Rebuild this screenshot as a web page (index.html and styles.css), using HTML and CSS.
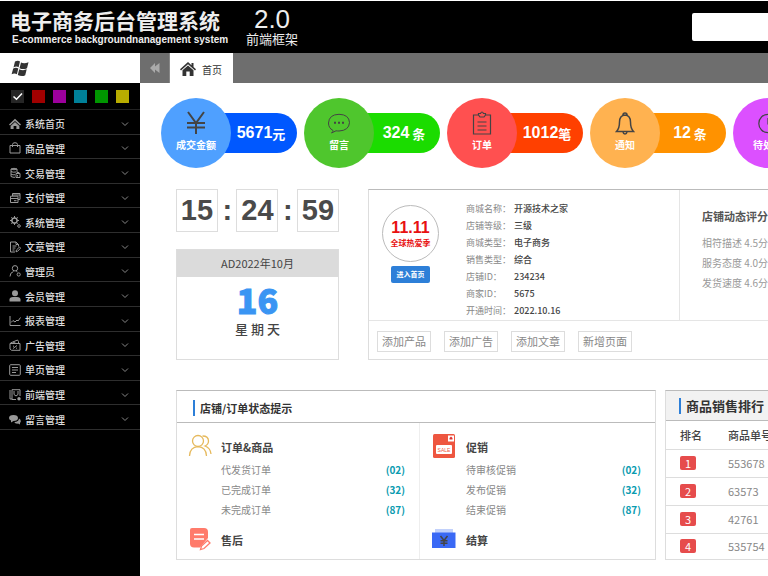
FILE: index.html
```html
<!DOCTYPE html>
<html lang="zh-CN">
<head>
    <meta charset="UTF-8">
    <meta name="viewport" content="width=device-width, initial-scale=1.0">
    <title>电子商务后台管理系统</title>
    <link rel="stylesheet" href="styles.css">
</head>
<body>
<div class="page">
    <header class="header">
        <div class="brand">
            <h1>电子商务后台管理系统</h1>
            <p>E-commerce backgroundnanagement system</p>
        </div>
        <div class="version">
            <strong>2.0</strong>
            <span>前端框架</span>
        </div>
        <input class="search" type="search" aria-label="搜索">
    </header>

    <div class="layout">
        <aside class="sidebar">
            <div class="logo">
                <svg width="18" height="17" viewBox="0 0 18 17" fill="#333"><path d="M4 1.6Q7-.2 9 1.4L7.6 7.3Q5.400 5.900 2.500 7.400ZM10 2.400Q13 4 17.500 2.200L16 8.200Q12.500 9.900 8.500 8.200ZM2.200 8.500Q5 7 7.300 8.400L5.900 14.300Q3.600 12.700.6 14.200ZM8.200 9.200Q12 11 15.700 9.300L14.200 15.200Q11 17 6.800 15Z"/></svg>
            </div>
            <div class="themes">
                <button class="swatch dark" aria-label="黑色"><svg width="13" height="13" viewBox="0 0 13 13" fill="none" stroke="#fff" stroke-width="1.5"><path d="M2.500 6.500L5.500 9.300L11 3.500"/></svg></button>
                <button class="swatch red" aria-label="红色"></button>
                <button class="swatch purple" aria-label="紫色"></button>
                <button class="swatch teal" aria-label="青色"></button>
                <button class="swatch green" aria-label="绿色"></button>
                <button class="swatch yellow" aria-label="黄色"></button>
            </div>
            <nav class="menu">
                <a href="#"><svg class="icon" viewBox="0 0 12 12"><path class="solid" d="M6 .8L12 6.500L11 7.500L6 3L1 7.500L0 6.500ZM6 4L10.400 8V11H7.400V8H4.600V11H1.600V8Z"/></svg>系统首页<svg class="arrow" viewBox="0 0 8 6"><path d="M1 1.500L4 4.500L7 1.500"/></svg></a>
                <a href="#"><svg class="icon" viewBox="0 0 12 12"><path d="M1 3.500H11V11H1ZM3.500 5V2.500Q3.500.7 6 .7T8.500 2.500V5"/></svg>商品管理<svg class="arrow" viewBox="0 0 8 6"><path d="M1 1.500L4 4.500L7 1.500"/></svg></a>
                <a href="#"><svg class="icon" viewBox="0 0 12 12"><path d="M2 2Q5 .6 8 2V5M2 2V9.500Q4 10.500 6 10.300M2 2Q5 3.500 8 2M2 4.600Q4 5.600 7 5M2 7.200Q4 8.200 6 7.700M7 6.500H11V10.500H7ZM8 6.500V5.500H10V6.500M8.500 8V9.500"/></svg>交易管理<svg class="arrow" viewBox="0 0 8 6"><path d="M1 1.500L4 4.500L7 1.500"/></svg></a>
                <a href="#"><svg class="icon" viewBox="0 0 12 12"><path d="M3.500 4V1.500H11V7.500H9M1.500 4.200H9V10.500H1.500ZM1.500 6.500H9M5 8.700H7.500M3.500 3H11"/></svg>支付管理<svg class="arrow" viewBox="0 0 8 6"><path d="M1 1.500L4 4.500L7 1.500"/></svg></a>
                <a href="#"><svg class="icon" viewBox="0 0 12 12"><circle cx="5.500" cy="4.500" r="2.600" stroke-width="1.500"/><path d="M5.500 0V2M5.500 7V9M1 4.500H3M8 4.500H10M2.300 1.300L3.700 2.700M7.300 6.300L8.700 7.700M8.700 1.300L7.300 2.700M3.700 6.300L2.300 7.700"/><circle cx="10" cy="10" r="1.300"/></svg>系统管理<svg class="arrow" viewBox="0 0 8 6"><path d="M1 1.500L4 4.500L7 1.500"/></svg></a>
                <a href="#"><svg class="icon" viewBox="0 0 12 12"><path d="M9.500 5.500V3.500L7 1H1.500V11H6M7 1V3.500H9.500M3.500 5H7.500M3.500 7H6.500M3.500 9H5.500M7 10.800L7.400 9L10.500 6L11.600 7.200L8.600 10.300Z"/></svg>文章管理<svg class="arrow" viewBox="0 0 8 6"><path d="M1 1.500L4 4.500L7 1.500"/></svg></a>
                <a href="#"><svg class="icon" viewBox="0 0 12 12"><circle cx="6" cy="3.300" r="2.700"/><path d="M1 11.500Q1 7.500 4.500 6.500M7.300 6.300L8.500 7"/><circle cx="9.700" cy="9.500" r="1.600"/></svg>管理员<svg class="arrow" viewBox="0 0 8 6"><path d="M1 1.500L4 4.500L7 1.500"/></svg></a>
                <a href="#"><svg class="icon" viewBox="0 0 12 12"><circle class="solid" cx="6" cy="3.200" r="3"/><path class="solid" d="M.5 11.600V9.500Q.5 7 4 7H8Q11.500 7 11.500 9.500V11.600Z"/></svg>会员管理<svg class="arrow" viewBox="0 0 8 6"><path d="M1 1.500L4 4.500L7 1.500"/></svg></a>
                <a href="#"><svg class="icon" viewBox="0 0 12 12"><path d="M1 1V10.500H11.500M2 7.500L4 5.500L6 7L8 5L9 6L11.500 2.500"/></svg>报表管理<svg class="arrow" viewBox="0 0 8 6"><path d="M1 1.500L4 4.500L7 1.500"/></svg></a>
                <a href="#"><svg class="icon" viewBox="0 0 12 12"><path d="M1 4.500H11V11.300H2.500L1 10ZM1.500 4L8.500 1L9.500 2.500V4.500M4 3L7 4.500M4 9.500L8 6.500M4 7.200H5M7 9.200H8"/></svg>广告管理<svg class="arrow" viewBox="0 0 8 6"><path d="M1 1.500L4 4.500L7 1.500"/></svg></a>
                <a href="#"><svg class="icon" viewBox="0 0 12 12"><rect x=".7" y=".7" width="10.600" height="10.600" rx="1"/><path d="M3 3.500H9M3 6H9M3 8.500H7"/></svg>单页管理<svg class="arrow" viewBox="0 0 8 6"><path d="M1 1.500L4 4.500L7 1.500"/></svg></a>
                <a href="#"><svg class="icon" viewBox="0 0 12 12"><path d="M1 1V10H3M3 .7H11V7M3 .7V10.500H7M5 2V5.500L7 7L9 5.500V2"/><circle class="solid" cx="10" cy="9.700" r="1.700"/></svg>前端管理<svg class="arrow" viewBox="0 0 8 6"><path d="M1 1.500L4 4.500L7 1.500"/></svg></a>
                <a href="#"><svg class="icon" viewBox="0 0 12 12"><path class="solid" d="M4.500 2Q9 2 9 5Q9 8 4.500 8L2 9.500V7.500Q0 6.500 0 5Q0 2 4.500 2ZM10 5.500Q12 6.500 11.800 8.300Q11.700 9.300 11 9.800V11.500L9 10.600Q6 10.900 5.300 9Q9.800 8.800 10 5.500Z"/></svg>留言管理<svg class="arrow" viewBox="0 0 8 6"><path d="M1 1.500L4 4.500L7 1.500"/></svg></a>
            </nav>
        </aside>

        <main class="main">
            <div class="tabs">
                <button class="collapse" aria-label="收起菜单"><svg width="10" height="10" viewBox="0 0 10 10" fill="#aaa"><path d="M5 0V3.500L9.500 0V10L5 6.500V10L0 5Z"/></svg></button>
                <a class="tab" href="#"><svg width="16" height="14" viewBox="0 0 16 14" fill="#333"><path d="M8 0L11.500 3.200V1H13.500V5L16 7.300L15 8.400L8 2.200L1 8.400L0 7.300ZM8 3.400L13.500 8.300V14H9.700V9.500H6.300V14H2.500V8.300Z"/></svg>首页</a>
            </div>

            <section class="stats">
                <div class="stat blue">
                    <div class="circle"><svg width="20" height="24" viewBox="0 0 20 24" fill="none" stroke="#444" stroke-width="2"><path d="M2 1L10 12L18 1M10 12V23M1 12H19M1 16.500H19"/></svg><span>成交金额</span></div>
                    <div class="pill"><b>5671</b>元</div>
                </div>
                <div class="stat lime">
                    <div class="circle"><svg width="24" height="24" viewBox="0 0 24 24" fill="none" stroke="#444"><path d="M6 19.500Q1.500 17 1.500 12Q2 3.500 12 3.300Q22 3.500 22.500 11.500Q22 19.500 12 20Q10 20 9 19.800L4.500 22Q6.500 20.500 6 19.500Z"/><path d="M7 11.800H9M11 11.800H13M15 11.800H17" stroke-width="2"/></svg><span>留言</span></div>
                    <div class="pill"><b>324</b>&nbsp;条</div>
                </div>
                <div class="stat coral">
                    <div class="circle"><svg width="20" height="24" viewBox="0 0 20 24" fill="none" stroke="#444" stroke-width="1.200"><path d="M6.500 4H1.500V23H18.500V4H13.500M6.500 2.500H8.500Q10-.5 11.500 2.500H13.500V4L12 6H8L6.500 4ZM5.500 11H14.500M5.500 15H14.500M5.500 19H14.500"/></svg><span>订单</span></div>
                    <div class="pill"><b>1012</b>笔</div>
                </div>
                <div class="stat orange">
                    <div class="circle"><svg width="20" height="24" viewBox="0 0 20 24" fill="none" stroke="#444" stroke-width="1.500"><path d="M8 4Q8 2 10 2T12 4M10 4Q15.500 4.500 15.500 11Q15.500 17.500 18.500 20.500H1.500Q4.500 17.500 4.500 11Q4.500 4.500 10 4ZM8 21Q8.300 23 10 23T12 21"/></svg><span>通知</span></div>
                    <div class="pill"><b>12</b>&nbsp;条</div>
                </div>
                <div class="stat violet">
                    <div class="circle"><svg width="20" height="24" viewBox="0 0 20 24" fill="none" stroke="#444" stroke-width="1.200"><circle cx="10" cy="12.500" r="9.200"/><path d="M10 7V13H15"/></svg><span>待处理</span></div>
                    <div class="pill"></div>
                </div>
            </section>

            <div class="row">
                <section class="today">
                    <div class="clock">
                        <span class="digits">15</span>
                        <span>:</span>
                        <span class="digits">24</span>
                        <span>:</span>
                        <span class="digits">59</span>
                    </div>
                    <div class="calendar">
                        <div class="month">AD2022年10月</div>
                        <div class="day">16</div>
                        <div class="week">星 期 天</div>
                    </div>
                </section>

                <section class="shop">
                    <div class="shop-body">
                        <div class="shop-logo">
                            <div class="badge"><b>11.11</b><span>全球热爱季</span></div>
                            <a href="#">进入首页</a>
                        </div>
                        <dl class="shop-info">
                            <dt>商城名称：</dt><dd>开源技术之家</dd>
                            <dt>店铺等级：</dt><dd>三级</dd>
                            <dt>商城类型：</dt><dd>电子商务</dd>
                            <dt>销售类型：</dt><dd>综合</dd>
                            <dt>店铺ID：</dt><dd>234234</dd>
                            <dt>商家ID：</dt><dd>5675</dd>
                            <dt>开通时间：</dt><dd>2022.10.16</dd>
                        </dl>
                        <div class="score">
                            <h2>店铺动态评分</h2>
                            <p>相符描述 4.5分</p>
                            <p>服务态度 4.0分</p>
                            <p>发货速度 4.6分</p>
                        </div>
                    </div>
                    <div class="shop-actions">
                        <button>添加产品</button>
                        <button>添加广告</button>
                        <button>添加文章</button>
                        <button>新增页面</button>
                    </div>
                </section>
            </div>

            <div class="row bottom">
                <section class="status">
                    <h2 class="status-title"><span class="bar"></span>店铺/订单状态提示</h2>
                    <div class="status-cols">
                        <div class="status-col">
                            <div class="group">
                                <svg width="24" height="24" viewBox="0 0 24 24" fill="none" stroke="#e6b95c" stroke-width="1.300"><circle cx="10" cy="7" r="5.500"/><path d="M1.500 22Q2 13 10 12.700Q18 13 18.500 22M14.500 2Q20.500 2 20.500 7Q20.500 10.500 17 12Q22.500 14 23 20"/></svg>
                                <h3>订单&amp;商品</h3>
                                <ul>
                                    <li>代发货订单<b>(02)</b></li>
                                    <li>已完成订单<b>(32)</b></li>
                                    <li>未完成订单<b>(87)</b></li>
                                </ul>
                            </div>
                            <div class="group">
                                <svg width="24" height="24" viewBox="0 0 24 24"><path fill="#ff7b6b" d="M2 3Q2 1 4 1H16Q20 1 20 5V11L12 20.500H6Q2 20.500 2 16.500Z"/><path stroke="#fff" stroke-width="1.500" d="M6 7.500H16M6 12H16"/><path fill="#fff" stroke="#ff7b6b" stroke-width="1.300" d="M12.500 22.500L13.500 19L19.500 13.500L22 16L16 21.500Z"/></svg>
                                <h3>售后</h3>
                            </div>
                        </div>
                        <div class="status-col">
                            <div class="group">
                                <svg width="24" height="24" viewBox="0 0 24 24"><rect width="22" height="24" rx="1.500" fill="#ee5640"/><path fill="#fff" d="M15 1.500H21V7.500H15Z"/><path fill="#d33" d="M16.500 4L18 2.500L19.500 4V5.500H16.500Z"/><rect x="3" y="11" width="16" height="9" rx="1" fill="#fff"/><text x="11" y="17.500" font-family="Liberation Sans, sans-serif" font-size="5" text-anchor="middle" fill="#ee5640">SALE</text></svg>
                                <h3>促销</h3>
                                <ul>
                                    <li>待审核促销<b>(02)</b></li>
                                    <li>发布促销<b>(32)</b></li>
                                    <li>结束促销<b>(87)</b></li>
                                </ul>
                            </div>
                            <div class="group">
                                <svg width="24" height="24" viewBox="0 0 24 24"><path fill="#c2d1fb" d="M2 2H20V6H2Z"/><path fill="#3a69f5" d="M-1 5.500H22.500V21H-1Z"/><path fill="none" stroke="#444" stroke-width="1.500" d="M7.500 9L11 13.500L14.500 9M11 13.500V19M7.500 13.700H14.500M7.500 16.300H14.500"/></svg>
                                <h3>结算</h3>
                            </div>
                        </div>
                    </div>
                </section>

                <section class="ranking">
                    <h2><span class="bar"></span>商品销售排行</h2>
                    <table>
                        <thead>
                            <tr><th>排名</th><th>商品单号</th></tr>
                        </thead>
                        <tbody>
                            <tr><td><span class="rank">1</span></td><td>553678</td></tr>
                            <tr><td><span class="rank">2</span></td><td>63573</td></tr>
                            <tr><td><span class="rank">3</span></td><td>42761</td></tr>
                            <tr><td><span class="rank">4</span></td><td>535754</td></tr>
                        </tbody>
                    </table>
                </section>
            </div>
        </main>
    </div>
</div>
</body>
</html>
```

FILE: styles.css
```css
* {
    box-sizing: border-box;
    margin: 0;
    padding: 0;
}
body {
    font-family: "Noto Sans CJK SC", sans-serif;
    font-size: 10px;
    color: #444;
    background: #fff;
    overflow: hidden;
}
a {
    color: inherit;
    text-decoration: none;
}
button {
    font-family: inherit;
    border: 0;
    cursor: pointer;
}
ul {
    list-style: none;
}
svg {
    display: block;
    flex: none;
}
.page {
    min-width: 960px;
    min-height: 100vh;
    display: flex;
    flex-direction: column;
}

/* header */
.header {
    display: flex;
    align-items: center;
    height: 52px;
    margin-top: 1px;
    padding: 0 68px 0 10px;
    background: #000;
    color: #eee;
}
.brand {
    width: 236px;
}
.brand h1 {
    font-size: 21px;
    font-weight: 700;
    line-height: 26px;
    white-space: nowrap;
}
.brand p {
    padding-left: 2px;
    font: bold 10px/14px "Liberation Sans", sans-serif;
    white-space: nowrap;
}
.version {
    display: flex;
    flex-direction: column;
    align-items: center;
}
.version strong {
    font: 26px/24px "Liberation Sans", sans-serif;
}
.version span {
    font-size: 13px;
    line-height: 16px;
}
.search {
    width: 200px;
    height: 28px;
    margin-left: auto;
    padding: 0 8px;
    border: 0;
    border-radius: 2px;
    background: #fff;
}

/* sidebar */
.layout {
    display: flex;
    flex: 1;
}
.sidebar {
    width: 140px;
    flex: none;
    background: #000;
}
.logo {
    display: flex;
    align-items: center;
    height: 30px;
    padding-left: 11px;
    background: #fff;
}
.themes {
    display: flex;
    align-items: center;
    gap: 8px;
    height: 27px;
    padding-left: 11px;
    border-bottom: 1px solid #222;
}
.swatch {
    width: 13px;
    height: 13px;
}
.dark { background: #262626; }
.red { background: #a00000; }
.purple { background: #9c009c; }
.teal { background: #008098; }
.green { background: #009600; }
.yellow { background: #b8ac00; }
.menu {
    display: grid;
    grid-auto-rows: 1fr;
    height: 320px;
}
.menu a {
    display: flex;
    align-items: center;
    gap: 4px;
    padding: 4px 11px 0 9px;
    border-bottom: 1px solid #2e2e2e;
    color: #ddd;
    font-weight: 500;
}
.icon {
    width: 12px;
    height: 12px;
    fill: none;
    stroke: #999;
}
.icon .solid {
    fill: #999;
    stroke: none;
}
.arrow {
    width: 8px;
    height: 6px;
    margin-left: auto;
    fill: none;
    stroke: #888;
}

/* tabs */
.main {
    flex: 1;
    min-width: 0;
}
.tabs {
    display: flex;
    height: 30px;
    background: #6e6e6e;
}
.collapse {
    display: flex;
    align-items: center;
    justify-content: center;
    width: 30px;
    background: #6e6e6e;
    border-right: 1px solid #888;
}
.tab {
    display: flex;
    align-items: center;
    gap: 6px;
    padding: 2px 11px 0 10px;
    background: #fff;
    color: #333;
}

/* stats */
.stats {
    display: flex;
    gap: 7px;
    padding: 15px 0 0 21px;
}
.stat {
    display: flex;
    align-items: center;
    flex: none;
    width: 136px;
    color: #fff;
}
.circle {
    display: flex;
    flex-direction: column;
    align-items: center;
    justify-content: center;
    flex: none;
    width: 70px;
    height: 70px;
    border-radius: 50%;
    font-weight: 700;
    line-height: 20px;
    z-index: 1;
}
.pill {
    display: flex;
    align-items: center;
    justify-content: center;
    flex: 1;
    height: 40px;
    margin-left: -35px;
    padding-left: 29px;
    border-radius: 0 20px 20px 0;
    font-size: 13px;
    font-weight: 700;
}
.pill b {
    font: bold 16px "Liberation Sans", sans-serif;
}
.blue .circle { background: #4fa0ff; }
.blue .pill { background: #0058ff; }
.lime .circle { background: #4fc62d; }
.lime .pill { background: #1bdc00; }
.coral .circle { background: #ff5050; }
.coral .pill { background: #ff4000; }
.orange .circle { background: #ffb250; }
.orange .pill { background: #ff9200; }
.violet .circle { background: #dc50ff; }
.violet .pill { background: #c000f0; }

.row {
    display: flex;
    gap: 29px;
    padding: 21px 20px 0 36px;
}
.bottom {
    gap: 9px;
    padding-top: 30px;
}

/* clock and calendar */
.today {
    display: flex;
    flex-direction: column;
    gap: 17px;
    width: 163px;
}
.clock {
    display: flex;
    align-items: center;
    justify-content: space-between;
    font: bold 29px/41px "Liberation Sans", sans-serif;
    color: #4a4a4a;
}
.digits {
    width: 42px;
    border: 1px solid #ddd;
    text-align: center;
}
.calendar {
    flex: 1;
    border: 1px solid #ddd;
    text-align: center;
}
.month {
    background: #dbdbdb;
    font-size: 11px;
    line-height: 27px;
}
.day {
    padding-top: 3px;
    color: #3a95f3;
    font-size: 34px;
    font-weight: 900;
    line-height: 40px;
    -webkit-text-stroke: 1px #3a95f3;
}
.week {
    font-size: 13px;
    font-weight: 500;
    line-height: 18px;
}

/* shop */
.shop {
    flex: 1;
    border: 1px solid #ddd;
    border-top-color: #bbb;
}
.shop-body {
    display: flex;
    height: 131px;
    border-bottom: 1px solid #e5e5e5;
}
.shop-logo {
    display: flex;
    flex-direction: column;
    align-items: center;
    gap: 4px;
    padding: 15px 27px 0 13px;
}
.badge {
    display: flex;
    flex-direction: column;
    align-items: center;
    justify-content: center;
    width: 57px;
    height: 57px;
    border: 1px solid #bbb;
    border-radius: 50%;
    color: #e81010;
}
.badge b {
    font: bold 16px/18px "Liberation Sans", sans-serif;
}
.badge span {
    font-size: 8px;
    font-weight: 700;
    line-height: 12px;
}
.shop-logo a {
    width: 39px;
    border-radius: 2px;
    background: #2d7fd8;
    color: #fff;
    font-size: 7px;
    font-weight: 700;
    line-height: 17px;
    text-align: center;
}
.shop-info {
    display: grid;
    grid-template-columns: 48px 1fr;
    width: 214px;
    padding-top: 10px;
    border-right: 1px solid #e5e5e5;
    font-size: 9px;
    line-height: 17px;
    align-content: start;
}
.shop-info dt {
    color: #888;
}
.shop-info dd {
    font-weight: 500;
}
.score {
    padding: 16px 0 0 22px;
    color: #999;
    line-height: 20px;
}
.score h2 {
    padding-bottom: 7px;
    color: #555;
    font-size: 11px;
    font-weight: 700;
}
.shop-actions {
    display: flex;
    gap: 13px;
    padding: 10px 8px 7px;
}
.shop-actions button {
    width: 54px;
    height: 21px;
    border: 1px solid #ddd;
    background: #fff;
    color: #888;
    font-size: 11px;
    line-height: 19px;
}

/* order status */
.status {
    width: 480px;
    flex: none;
    border: 1px solid #ddd;
    border-top-color: #bbb;
}
.bar {
    width: 2px;
    height: 16px;
    background: #2d7fd8;
}
.status-title {
    display: flex;
    align-items: center;
    gap: 5px;
    height: 32px;
    padding: 3px 16px 0;
    border-bottom: 1px solid #bbb;
    color: #333;
    font-size: 11px;
    font-weight: 700;
}
.status-cols {
    display: flex;
    height: 136px;
}
.status-col {
    display: flex;
    flex-direction: column;
    justify-content: space-between;
    flex: 1;
    padding: 11px 14px 6px 13px;
}
.status-col:first-child {
    flex: 0 0 243px;
    padding-left: 11px;
    border-right: 1px solid #eee;
}
.group {
    display: grid;
    grid-template-columns: 24px 1fr;
    column-gap: 9px;
}
.group svg {
    overflow: visible;
}
.group h3 {
    font-size: 11px;
    font-weight: 700;
    line-height: 26px;
}
.group ul {
    grid-column: 2;
}
.group li {
    display: flex;
    justify-content: space-between;
    color: #888;
    line-height: 21px;
    margin-top: -1px;
}
.group b {
    color: #0a9bb0;
    font-weight: 700;
}

/* ranking */
.ranking {
    flex: 1;
    border: 1px solid #ddd;
    border-top-color: #bbb;
}
.ranking h2 {
    display: flex;
    align-items: center;
    gap: 5px;
    height: 30px;
    padding-left: 13px;
    border-bottom: 1px solid #bbb;
    background: #f2f2f2;
    color: #333;
    font-size: 13px;
    font-weight: 700;
}
.ranking table {
    width: 100%;
    border-collapse: collapse;
    font-size: 11px;
}
.ranking th,
.ranking td {
    height: 28px;
    border-bottom: 1px solid #ddd;
    text-align: left;
}
.ranking tbody tr:last-child td {
    height: 26px;
    border-bottom: 0;
}
.ranking th {
    font-weight: 500;
}
.ranking td {
    color: #888;
}
.ranking th:first-child,
.ranking td:first-child {
    width: 62px;
    padding-left: 14px;
}
.rank {
    display: block;
    width: 16px;
    border-radius: 2px;
    background: #e64c4c;
    color: #fff;
    line-height: 14px;
    text-align: center;
}
```
